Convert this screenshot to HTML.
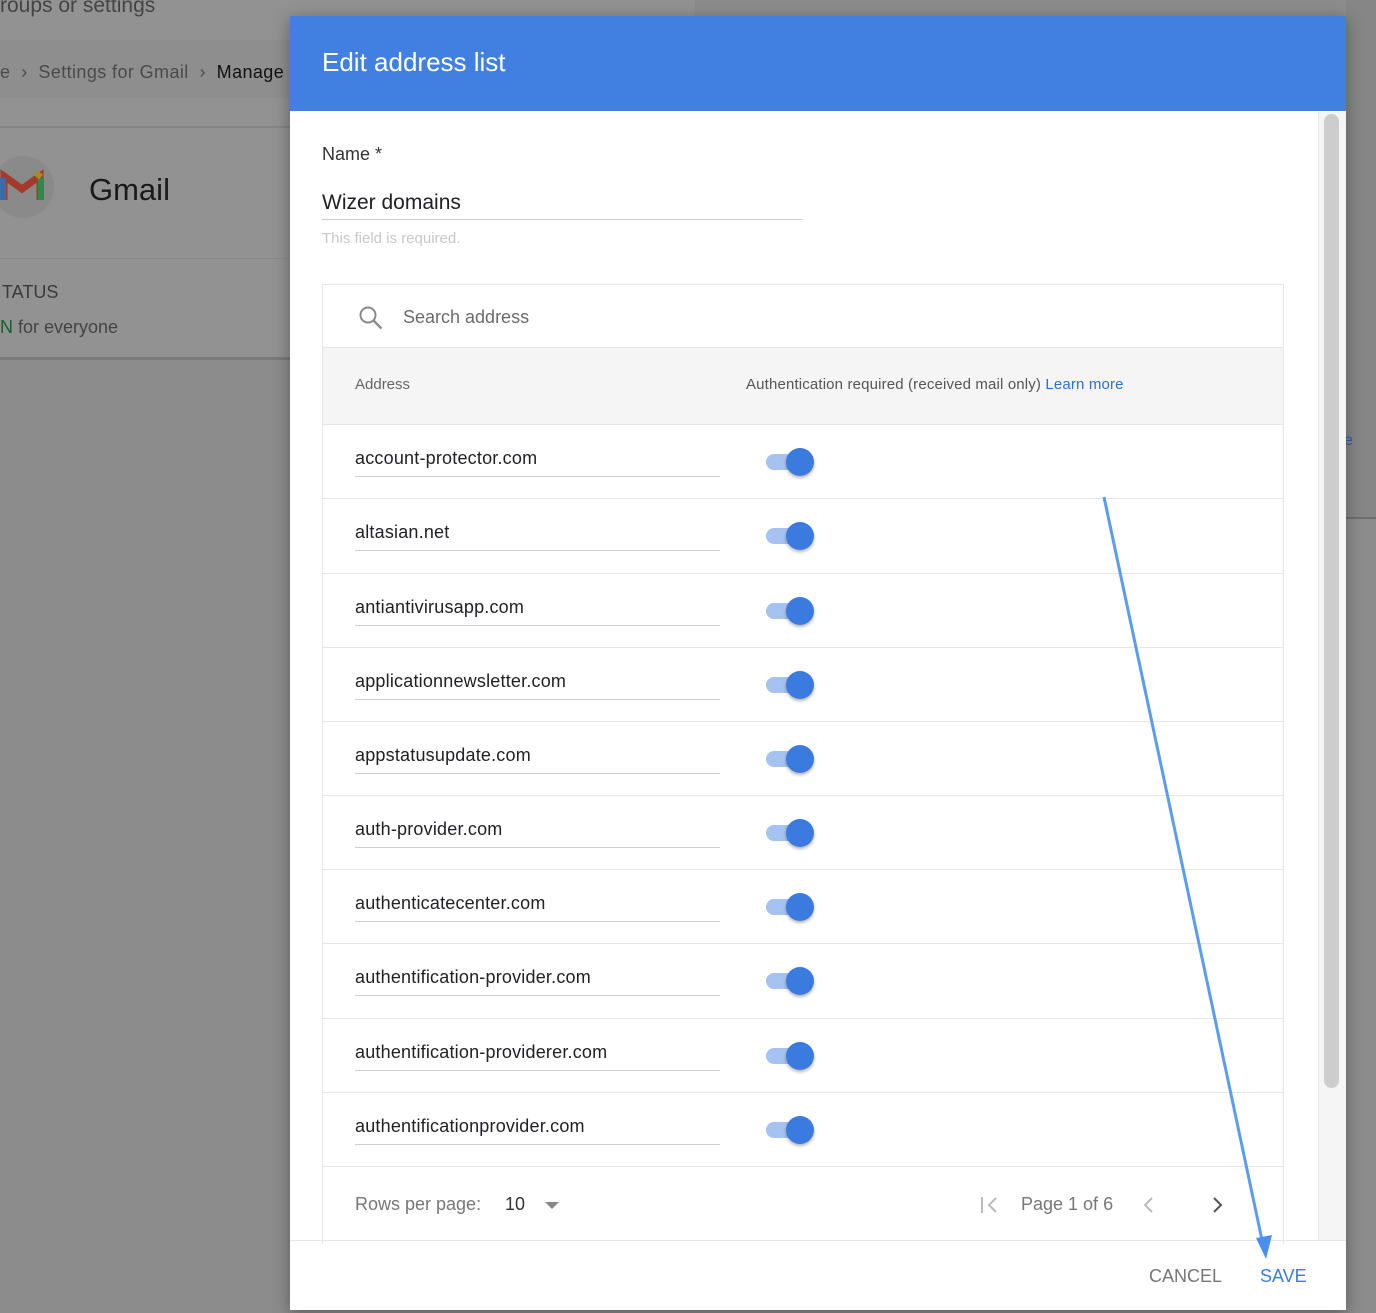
<!DOCTYPE html>
<html><head><meta charset="utf-8"><style>
*{margin:0;padding:0;box-sizing:border-box}
body{width:1376px;height:1313px;overflow:hidden;background:#8c8c8c;font-family:"Liberation Sans",Roboto,sans-serif;position:relative}
.abs{position:absolute}
.dlg{left:290px;top:16px;width:1056px;height:1294px;background:#fff;box-shadow:0 4px 16px rgba(0,0,0,.35)}
.hdr{left:0;top:0;width:1056px;height:95px;background:#4180e0;color:#fff;font-size:26px;padding:31px 0 0 32px}
.tbl{left:32px;top:268px;width:962px;height:960px;border:1px solid #e6e6e6;border-bottom:none}
.row{position:absolute;left:0;width:960px;height:74px;border-top:1px solid #e6e6e6}
.row .t{position:absolute;left:32px;top:23px;font-size:18px;color:#202124;width:365px;height:29px;border-bottom:1px solid #cfcfcf;letter-spacing:.2px}
.tog{position:absolute;left:443px;top:29px;width:46px;height:16px;border-radius:8px;background:#a6c2f0}
.tog:after{content:"";position:absolute;left:20px;top:-6px;width:28px;height:28px;border-radius:50%;background:#3b7be0;box-shadow:0 2px 3px rgba(0,0,0,.3)}
</style></head><body>
<div class="abs" style="left:0;top:0;width:695px;height:358px;background:#929292"></div>
<div class="abs" style="left:0;top:40px;width:290px;height:58px;background:#8e8e8e"></div>
<div class="abs" style="left:0;top:-6px;font-size:21px;color:#444">roups or settings</div>
<div class="abs" style="left:0;top:62px;font-size:18px;color:#4a4a4a;letter-spacing:.4px">e &nbsp;›&nbsp; Settings for Gmail &nbsp;›&nbsp; <span style="color:#111">Manage</span></div>
<div class="abs" style="left:0;top:126px;width:290px;height:2px;background:#858585"></div>
<div class="abs" style="left:-8px;top:156px;width:62px;height:62px;border-radius:50%;background:#8a8a8a"></div>
<svg class="abs" style="left:0;top:168px" width="44" height="34" viewBox="0 0 44 34"><path d="M4 32V8l18 13L40 8v24" fill="none" stroke="#a33a2c" stroke-width="7"/><path d="M3 10v22" stroke="#3d6aa8" stroke-width="6"/><path d="M41 10v22" stroke="#2e8a4a" stroke-width="6"/><path d="M36 5l5 4" stroke="#b08a20" stroke-width="6"/></svg>
<div class="abs" style="left:89px;top:172px;font-size:31px;color:#1a1a1a">Gmail</div>
<div class="abs" style="left:0;top:258px;width:290px;height:1px;background:#888"></div>
<div class="abs" style="left:2px;top:282px;font-size:18px;color:#3a3a3a">TATUS</div>
<div class="abs" style="left:0;top:317px;font-size:18px;color:#444"><span style="color:#14622e">N</span> for everyone</div>
<div class="abs" style="left:0;top:357px;width:290px;height:3px;background:#7a7a7a"></div>
<div class="abs" style="left:1346px;top:0;width:30px;height:518px;background:#868686"></div>
<div class="abs" style="left:1346px;top:517px;width:30px;height:2px;background:#6f6f6f"></div>
<div class="abs" style="left:1344px;top:432px;font-size:16px;color:#2f5fa8">e</div>

<div class="abs dlg">
<div class="abs hdr">Edit address list</div>
<div class="abs" style="left:1028px;top:96px;width:28px;height:1128px;background:#f5f5f5;border-left:1px solid #e8e8e8"></div>
<div class="abs" style="left:1034px;top:98px;width:15px;height:974px;border-radius:8px;background:#cdcdcd"></div>
<div class="abs" style="left:32px;top:128px;font-size:18px;color:#333">Name *</div>
<div class="abs" style="left:32px;top:175px;font-size:21px;color:#202124">Wizer domains</div>
<div class="abs" style="left:32px;top:203px;width:481px;height:1px;background:#cfcfcf"></div>
<div class="abs" style="left:32px;top:214px;font-size:15px;color:#c8c8c8">This field is required.</div>
<div class="abs tbl">
 <svg class="abs" style="left:35px;top:20px" width="26" height="26" viewBox="0 0 26 26"><circle cx="10" cy="10" r="7.5" fill="none" stroke="#8a8a8a" stroke-width="2"/><path d="M15.5 15.5l8 8" stroke="#8a8a8a" stroke-width="2.4"/></svg>
 <div class="abs" style="left:80px;top:22px;font-size:18px;color:#6b6b6b">Search address</div>
 <div class="abs" style="left:0;top:62px;width:960px;height:77px;background:#f5f5f5;border-top:1px solid #e6e6e6"></div>
 <div class="abs" style="left:32px;top:91px;font-size:15px;color:#666">Address</div>
 <div class="abs" style="left:423px;top:91px;font-size:15px;color:#555;letter-spacing:.15px">Authentication required (received mail only) <span style="color:#2f6fd8">Learn more</span></div>
 <div class="row" style="top:139px"><div class="t">account-protector.com</div><div class="tog"></div></div>
 <div class="row" style="top:213px"><div class="t">altasian.net</div><div class="tog"></div></div>
 <div class="row" style="top:288px"><div class="t">antiantivirusapp.com</div><div class="tog"></div></div>
 <div class="row" style="top:362px"><div class="t">applicationnewsletter.com</div><div class="tog"></div></div>
 <div class="row" style="top:436px"><div class="t">appstatusupdate.com</div><div class="tog"></div></div>
 <div class="row" style="top:510px"><div class="t">auth-provider.com</div><div class="tog"></div></div>
 <div class="row" style="top:584px"><div class="t">authenticatecenter.com</div><div class="tog"></div></div>
 <div class="row" style="top:658px"><div class="t">authentification-provider.com</div><div class="tog"></div></div>
 <div class="row" style="top:733px"><div class="t">authentification-providerer.com</div><div class="tog"></div></div>
 <div class="row" style="top:807px"><div class="t">authentificationprovider.com</div><div class="tog"></div></div>
 <div class="row" style="top:881px;height:80px">
  <div class="abs" style="left:32px;top:27px;font-size:18px;color:#777">Rows per page:</div>
  <div class="abs" style="left:182px;top:27px;font-size:18px;color:#333">10</div>
  <div class="abs" style="left:222px;top:35px;width:0;height:0;border-left:7px solid transparent;border-right:7px solid transparent;border-top:7px solid #888"></div>
  <svg class="abs" style="left:656px;top:28px" width="22" height="20"><path d="M3 2v16M17 3l-7 7 7 7" fill="none" stroke="#bbb" stroke-width="2"/></svg>
  <div class="abs" style="left:698px;top:27px;font-size:18px;color:#777">Page 1 of 6</div>
  <svg class="abs" style="left:818px;top:28px" width="16" height="20"><path d="M11 3l-7 7 7 7" fill="none" stroke="#bbb" stroke-width="2"/></svg>
  <svg class="abs" style="left:886px;top:28px" width="16" height="20"><path d="M5 3l7 7-7 7" fill="none" stroke="#555" stroke-width="2"/></svg>
 </div>
</div>
<div class="abs" style="left:0;top:1224px;width:1056px;height:1px;background:#e6e6e6"></div>
<div class="abs" style="left:859px;top:1250px;font-size:18px;color:#777">CANCEL</div>
<div class="abs" style="left:970px;top:1250px;font-size:18px;color:#3b7be0">SAVE</div>
</div>
<svg class="abs" style="left:0;top:0" width="1376" height="1313"><path d="M1104 497L1262 1240" stroke="#5a9cf0" stroke-width="3"/><path d="M1256 1238l16 -3 -6 24z" fill="#4a8fee"/></svg>
</body></html>
